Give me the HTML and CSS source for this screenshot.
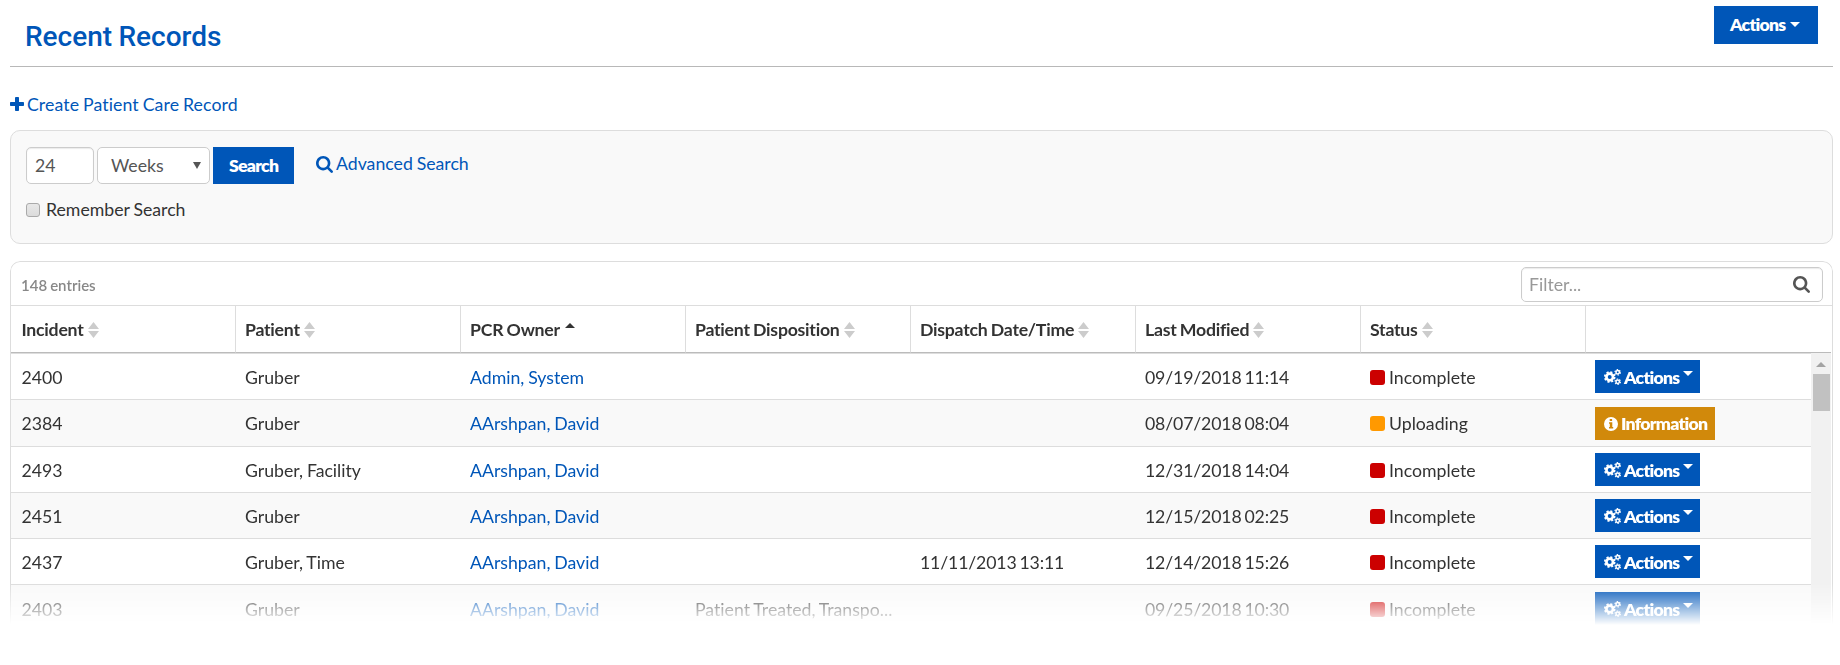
FILE: index.html
```html
<!DOCTYPE html>
<html lang="en">
<head>
  <meta charset="UTF-8" />
  <meta name="viewport" content="width=device-width, initial-scale=1.0"/>
  <title>Recent Records</title>
  <link rel="stylesheet" href="styles.css">
</head>
<body>
  <svg class="sprite" aria-hidden="true">
    <symbol id="icon-search" viewBox="0 0 1664 1664"><path d="M1152 704q0-185-131.500-316.500T704 256 387.500 387.500 256 704t131.500 316.500T704 1152t316.500-131.500T1152 704zm512 832q0 52-38 90t-90 38q-54 0-90-38l-343-342q-179 124-399 124-143 0-273.500-55.500t-225-150-150-225T0 704t55.500-273.500 150-225 225-150T704 0t273.500 55.500 225 150 150 225T1408 704q0 220-124 399l343 343q37 37 37 90z"/></symbol>
    <symbol id="icon-plus" viewBox="0 0 14 14"><path d="M6 0h2.200q.8 0 .8.800V5h4.200q.8 0 .8.800v2.400q0 .8-.8.800H9v4.200q0 .8-.8.800H5.800q-.8 0-.8-.8V9H.8Q0 9 0 8.200V5.800Q0 5 .8 5H5V.8Q5 0 6 0z"/></symbol>
    <symbol id="icon-info" viewBox="0 0 14 14"><path fill-rule="evenodd" d="M7 0a7 7 0 1 1 0 14A7 7 0 0 1 7 0zM5.700 2v2h2.400V2zM5 5.200v1.600h.8V10H5v1.600h4.200V10h-.9V5.200z"/></symbol>
    <symbol id="icon-cogs" viewBox="0 0 17 16">
      <circle cx="5.700" cy="8" r="3.300" fill="none" stroke="currentColor" stroke-width="2.700"/>
      <circle cx="5.700" cy="8" r="4.900" fill="none" stroke="currentColor" stroke-width="1.800" stroke-dasharray="2.100 1.750"/>
      <circle cx="13.700" cy="3.300" r="1.700" fill="none" stroke="currentColor" stroke-width="1.500"/>
      <circle cx="13.700" cy="3.300" r="2.700" fill="none" stroke="currentColor" stroke-width="1.200" stroke-dasharray="1.500 1.330"/>
      <circle cx="13.700" cy="12.700" r="1.700" fill="none" stroke="currentColor" stroke-width="1.500"/>
      <circle cx="13.700" cy="12.700" r="2.700" fill="none" stroke="currentColor" stroke-width="1.200" stroke-dasharray="1.500 1.330"/>
    </symbol>
    <symbol id="icon-sort" viewBox="0 0 11 16"><path d="M5.500 0L11 7H0zM0 9h11l-5.500 7z"/></symbol>
  </svg>

  <header class="page-header">
    <h1>Recent Records</h1>
    <button class="btn btn-top">Actions<span class="caret"></span></button>
  </header>

  <a href="#" class="create-link"><svg class="plus"><use href="#icon-plus"/></svg>Create Patient Care Record</a>

  <section class="well">
    <div class="search-row">
      <input class="num" type="text" value="24">
      <div class="select">Weeks<span class="select-arrow"></span></div>
      <button class="btn btn-search">Search</button>
      <a href="#" class="advanced"><svg class="mag"><use href="#icon-search"/></svg>Advanced Search</a>
    </div>
    <label class="remember"><span class="checkbox"></span>Remember Search</label>
  </section>

  <section class="grid">
    <div class="grid-top">
      <span class="count">148 entries</span>
      <div class="filter"><span>Filter...</span><svg class="mag"><use href="#icon-search"/></svg></div>
    </div>
    <table class="head">
      <thead>
        <tr>
          <th>Incident<svg class="sort"><use href="#icon-sort"/></svg></th>
          <th>Patient<svg class="sort"><use href="#icon-sort"/></svg></th>
          <th>PCR Owner<span class="sort-up"></span></th>
          <th>Patient Disposition<svg class="sort"><use href="#icon-sort"/></svg></th>
          <th>Dispatch Date/Time<svg class="sort"><use href="#icon-sort"/></svg></th>
          <th>Last Modified<svg class="sort"><use href="#icon-sort"/></svg></th>
          <th>Status<svg class="sort"><use href="#icon-sort"/></svg></th>
          <th class="last"></th>
        </tr>
      </thead>
    </table>
    <div class="grid-body">
      <table class="rows">
        <tbody id="recordRows"></tbody>
      </table>
      <div class="scrollbar"><span class="scroll-up"></span><span class="thumb"></span></div>
    </div>
  </section>

  <script>
    const records = [
      ["2400", "Gruber", "Admin, System", "", "", "09/19/2018 11:14", "Incomplete"],
      ["2384", "Gruber", "AArshpan, David", "", "", "08/07/2018 08:04", "Uploading"],
      ["2493", "Gruber, Facility", "AArshpan, David", "", "", "12/31/2018 14:04", "Incomplete"],
      ["2451", "Gruber", "AArshpan, David", "", "", "12/15/2018 02:25", "Incomplete"],
      ["2437", "Gruber, Time", "AArshpan, David", "", "11/11/2013 13:11", "12/14/2018 15:26", "Incomplete"],
      ["2403", "Gruber", "AArshpan, David", "Patient Treated, Transpo...", "", "09/25/2018 10:30", "Incomplete"]
    ];

    const actionsBtn = `<button class="btn btn-row"><svg class="cogs"><use href="#icon-cogs"/></svg>Actions<span class="caret"></span></button>`;
    const infoBtn = `<button class="btn btn-row btn-info"><svg class="info"><use href="#icon-info"/></svg>Information</button>`;

    function loadRecords() {
      const tbody = document.getElementById("recordRows");

      records.forEach((r) => {
        const uploading = r[6] === "Uploading";
        const row = document.createElement("tr");
        row.innerHTML = `
          <td>${r[0]}</td>
          <td>${r[1]}</td>
          <td><a href="#">${r[2]}</a></td>
          <td>${r[3]}</td>
          <td class="date">${r[4]}</td>
          <td class="date">${r[5]}</td>
          <td><span class="dot ${uploading ? "orange" : "red"}"></span>${r[6]}</td>
          <td>${uploading ? infoBtn : actionsBtn}</td>
        `;
        tbody.appendChild(row);
      });
    }

    loadRecords();
  </script>
</body>
</html>
```

FILE: styles.css
```css
* { margin: 0; padding: 0; box-sizing: border-box; }

body {
  width: 1840px;
  height: 665px;
  padding: 0 7px 0 10px;
  font-family: Lato, sans-serif;
  font-size: 17.7px;
  font-variant-ligatures: none;
  line-height: 24px;
  word-spacing: -0.7px;
  color: #333;
  background: #fff;
  overflow: hidden;
}

a { color: #0056b8; text-decoration: none; }
svg { fill: currentColor; flex: none; }
.sprite { display: none; }

.page-header {
  display: flex;
  justify-content: space-between;
  align-items: flex-start;
  height: 67px;
  padding: 6px 15px 0 15px;
  border-bottom: 1px solid #b8b8b8;
}

h1 {
  padding-top: 13px;
  font-family: Roboto, sans-serif;
  font-size: 28px;
  line-height: 36px;
  font-weight: 500;
  color: #0056b8;
}

.btn {
  display: flex;
  align-items: center;
  border: none;
  background: #0056b8;
  color: #fff;
  font-family: inherit;
  font-size: 17.7px;
  line-height: 24px;
  font-weight: 800;
  letter-spacing: -0.75px;
  cursor: pointer;
}

.caret {
  border-left: 5px solid transparent;
  border-right: 5px solid transparent;
  border-top: 5px solid #fff;
}

.btn-top {
  width: 104px;
  height: 38px;
  padding-left: 16px;
}
.btn-top .caret { margin: -2px 0 0 5px; }

.create-link {
  display: flex;
  align-items: center;
  height: 24px;
  margin-top: 26px;
  letter-spacing: 0.1px;
}
.plus {
  width: 14px;
  height: 14px;
  margin: -2px 3px 0 0;
}

.well {
  height: 114px;
  margin-top: 13px;
  padding: 16px 15px;
  background: #f9f9f9;
  border: 1px solid #ddd;
  border-radius: 10px;
}

.search-row { display: flex; height: 37px; }

.num {
  width: 68px;
  height: 37px;
  padding-left: 8px;
  border: 1px solid #ccc;
  border-radius: 5px;
  box-shadow: inset 0 1px 1px rgba(0, 0, 0, 0.08);
  font: inherit;
  color: #555;
}

.select {
  display: flex;
  justify-content: space-between;
  align-items: center;
  width: 113px;
  margin-left: 3px;
  padding: 0 8px 0 13px;
  background: #fff;
  border: 1px solid #ccc;
  border-radius: 5px;
  color: #555;
}
.select-arrow {
  border-left: 4px solid transparent;
  border-right: 4px solid transparent;
  border-top: 7px solid #555;
}

.btn-search {
  width: 81px;
  margin-left: 3px;
  padding: 1px 0 0 16px;
}

.mag { width: 17px; height: 17px; }
.advanced {
  display: flex;
  align-items: center;
  height: 34px;
  margin-left: 22px;
}
.advanced .mag { margin-right: 3px; }

.remember {
  display: flex;
  align-items: center;
  height: 24px;
  margin-top: 14px;
}
.checkbox {
  width: 14px;
  height: 14px;
  margin-right: 6px;
  border: 1px solid #aaa;
  border-radius: 3px;
  background: linear-gradient(#e8e8e8, #dcdcdc);
}

.grid {
  height: 364px;
  margin-top: 17px;
  border: 1px solid #ddd;
  border-bottom: none;
  border-radius: 10px 10px 0 0;
  overflow: hidden;
  mask-image: linear-gradient(#000 322px, transparent 364px);
}

.grid-top {
  display: flex;
  justify-content: space-between;
  align-items: center;
  height: 44px;
  border-bottom: 1px solid #ddd;
  padding: 2px 9px 0 10px;
}
.count { font-size: 15px; font-weight: 600; color: #888; }

.filter {
  display: flex;
  justify-content: space-between;
  align-items: center;
  width: 302px;
  height: 35px;
  padding: 0 12px 0 7px;
  border: 1px solid #ccc;
  border-radius: 5px;
  box-shadow: inset 0 1px 1px rgba(0, 0, 0, 0.08);
  color: #999;
}
.filter .mag { color: #555; }

table { border-collapse: separate; border-spacing: 0; table-layout: fixed; }
.head { width: 1820px; }

th, td {
  width: 225px;
  padding: 0 0 0 9px;
  text-align: left;
  white-space: nowrap;
}
th:first-child, td:first-child { padding-left: 10.5px; }
th {
  height: 47px;
  padding-top: 1px;
  border-right: 1px solid #ddd;
  border-bottom: 1px solid #bbb;
  font-weight: bold;
  letter-spacing: -0.25px;
}
th.last { width: 245px; border-right: none; }

.sort {
  width: 11px;
  height: 16px;
  margin-left: 4px;
  vertical-align: -2px;
  color: #ccc;
}
.sort-up {
  display: inline-block;
  margin-left: 5px;
  vertical-align: 8px;
  border-left: 5px solid transparent;
  border-right: 5px solid transparent;
  border-bottom: 5px solid #333;
}

.grid-body { display: flex; }
.rows { width: 1800px; }
td {
  height: 46px;
  padding-top: 2px;
  border-top: 1px solid #ddd;
}
.date { word-spacing: -1.5px; letter-spacing: -0.15px; }
tr:nth-child(2) td { height: 47px; }
tr:nth-child(even) td { background: #f9f9f9; }
tr:last-child td { padding-top: 4px; }

.dot {
  display: inline-block;
  width: 15px;
  height: 15px;
  margin-right: 4px;
  border-radius: 3px;
  vertical-align: -1px;
}
.red { background: #c00; }
.orange { background: #f90; }

.btn-row {
  width: 105px;
  height: 33px;
  margin-top: -2px;
  padding: 2px 0 0 9px;
}
.btn-row .caret { margin: -9px 0 0 4px; }
.btn-info { width: 120px; background: #d1890b; }
.cogs { width: 17px; height: 16px; margin: -1px 3px 0 0; }
.info { width: 14px; height: 14px; margin-right: 3px; }

.scrollbar {
  display: flex;
  flex-direction: column;
  align-items: center;
  width: 20px;
  background: #f1f1f1;
}
.scroll-up {
  margin-top: 9px;
  border-left: 5px solid transparent;
  border-right: 5px solid transparent;
  border-bottom: 5px solid #a3a3a3;
}
.thumb {
  width: 17px;
  height: 37px;
  margin-top: 7px;
  background: #c1c1c1;
}
```
